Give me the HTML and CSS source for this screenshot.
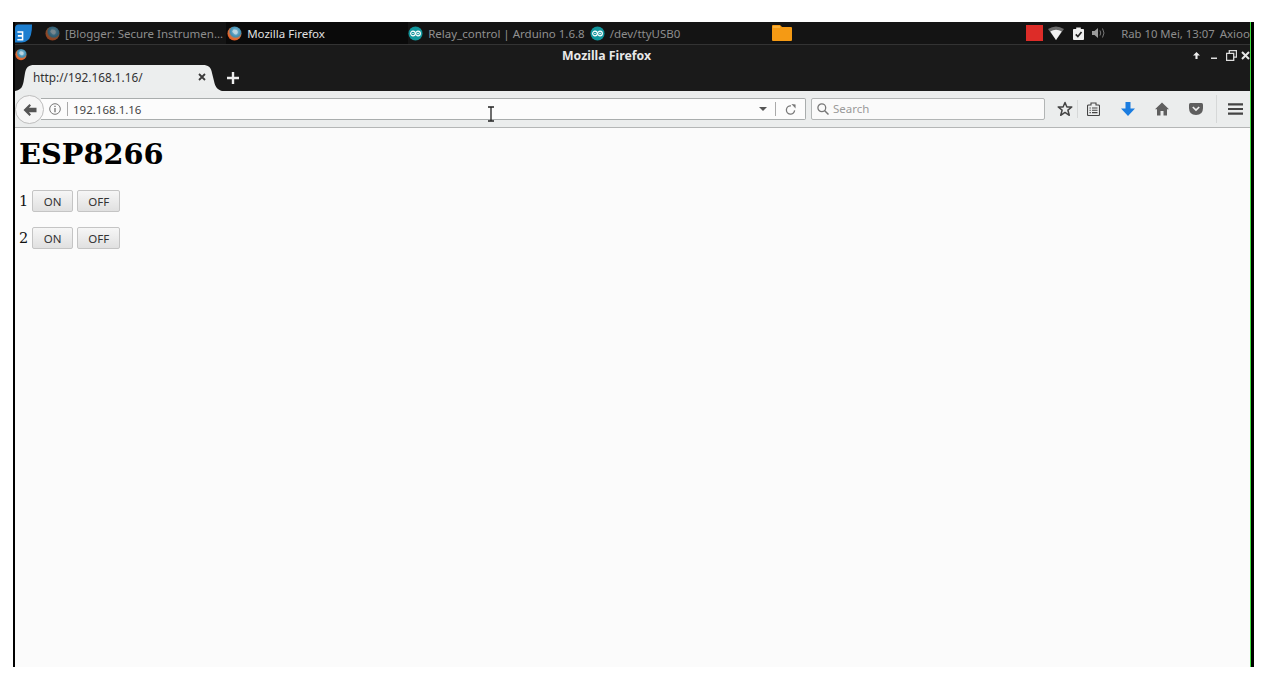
FILE: index.html
```html
<!DOCTYPE html>
<html lang="id">
<head>
<meta charset="utf-8">
<title>Mozilla Firefox</title>
<link rel="stylesheet" href="styles.css">
</head>
<body>
<svg class="defs" width="0" height="0" aria-hidden="true">
  <defs>
    <radialGradient id="fx" cx=".58" cy=".36" r=".68"><stop offset="0" stop-color="#8fc0d6"/><stop offset=".55" stop-color="#3f8fb4"/><stop offset=".72" stop-color="#d9703a"/><stop offset="1" stop-color="#e8551c"/></radialGradient>
    <symbol id="firefox" viewBox="0 0 16 16"><circle cx="8" cy="8" r="7.500" fill="url(#fx)"/><path d="M6.500 4C8.500 3 11 4 11.500 6 12 8 10 9.500 8.500 9 7 8.500 7 7 5.500 6.500z" fill="#d5e2e8" opacity=".7"/></symbol>
    <symbol id="arduino" viewBox="0 0 16 16"><circle cx="8" cy="8" r="7.500" fill="#12969c"/><circle cx="5.300" cy="8" r="2.500" fill="none" stroke="#fff" stroke-width="1.200"/><circle cx="10.700" cy="8" r="2.500" fill="none" stroke="#fff" stroke-width="1.200"/><path d="M4.300 8h2M9.700 8h2M10.700 7v2" stroke="#fff" stroke-width=".8"/></symbol>
  </defs>
</svg>
<main class="screen">
  <div class="desktop">
    <header class="panel">
      <svg class="start" viewBox="0 0 19 19"><path d="M0 4Q0 0 4 0H18Q18 14 13 17 11 19 7 19H0z" fill="#1d7fd0"/><path d="M2.500 8H8V16H2.500M3 12H8" fill="none" stroke="#fff" stroke-width="1.600"/></svg>
      <div class="task task-dim">
        <svg class="task-icon"><use href="#firefox"/></svg>
        <span>[Blogger: Secure Instrumen...</span>
      </div>
      <div class="task task-active">
        <svg class="task-icon"><use href="#firefox"/></svg>
        <span>Mozilla Firefox</span>
      </div>
      <div class="task task-relay">
        <svg class="task-icon"><use href="#arduino"/></svg>
        <span>Relay_control | Arduino 1.6.8</span>
      </div>
      <div class="task task-serial">
        <svg class="task-icon"><use href="#arduino"/></svg>
        <span>/dev/ttyUSB0</span>
      </div>
      <svg class="folder" viewBox="0 0 20 16"><path d="M0 1Q0 0 1 0H8L10 2H19Q20 2 20 3V15Q20 16 19 16H1Q0 16 0 15z" fill="#f59a14"/><path d="M1 2H8" stroke="#ffc860"/></svg>
      <div class="tray">
        <span class="tray-red"></span>
        <svg class="tray-wifi" viewBox="0 0 16 14"><path d="M0 3Q8-2 16 3L8 14z" fill="#6b6b6b"/><path d="M2.300 5.500Q8 2 13.700 5.500L8 14z" fill="#f2f2f2"/></svg>
        <svg class="tray-clip" viewBox="0 0 12 14"><path d="M1 2H3.500V.5H8.500V2H11Q12 2 12 3V13Q12 14 11 14H1Q0 14 0 13V3Q0 2 1 2z" fill="#eee"/><path d="M3 8L5.300 10.300 9.300 5.300" fill="none" stroke="#222" stroke-width="1.800"/></svg>
        <svg class="tray-vol" viewBox="0 0 15 12"><path d="M0 4H2.500L6 1V11L2.500 8H0z" fill="#9a9a9a"/><path d="M8 3.500Q9.500 6 8 8.500M10.500 1.500Q13.500 6 10.500 10.500" fill="none" stroke="#777"/></svg>
        <span class="clock">Rab 10 Mei, 13:07</span>
        <span class="host">Axioo</span>
      </div>
    </header>
    <div class="titlebar">
      <svg class="title-icon"><use href="#firefox"/></svg>
      <strong class="title-text">Mozilla Firefox</strong>
      <div class="wm">
        <svg viewBox="0 0 8 8" class="wm-up"><path d="M4 0L8 4H5.200V8H2.800V4H0z" fill="#eee"/></svg>
        <svg viewBox="0 0 8 8" class="wm-min"><path d="M1 6.500H7V8H1z" fill="#ddd"/></svg>
        <svg viewBox="0 0 10 10" class="wm-max"><path d="M3 2.500V.5H9.500V6.500H7.500M.5 3H7V9.500H.5z" fill="none" stroke="#ddd" stroke-width="1.200"/></svg>
        <svg viewBox="0 0 9 9" class="wm-close"><path d="M1 1L8 8M8 1L1 8" stroke="#e6e6e6" stroke-width="2"/></svg>
      </div>
    </div>
    <div class="tabstrip">
      <div class="tab">
        <span class="tab-title">http://192.168.1.16/</span>
        <svg class="tab-close" viewBox="0 0 8 8"><path d="M1 1L7 7M7 1L1 7" stroke="#3a3a3a" stroke-width="1.800"/></svg>
      </div>
      <svg class="newtab" viewBox="0 0 12 12"><path d="M6 0V12M0 6H12" stroke="#eee" stroke-width="2.400"/></svg>
    </div>
    <nav class="navbar">
      <div class="back"><svg viewBox="0 0 14 12"><path d="M6.500 0L.5 6 6.500 12 8 10.500 6 8.200H13.500V3.800H6L8 1.500z" fill="#555"/></svg></div>
      <div class="urlbar">
        <svg class="info" viewBox="0 0 12 12"><circle cx="6" cy="6" r="5.300" fill="none" stroke="#777"/><path d="M6 5V9.200M6 2.800V4" stroke="#666" stroke-width="1.200"/></svg>
        <span class="sep"></span>
        <span class="url">192.168.1.16</span>
        <span class="url-arrow"></span>
        <span class="sep sep-right"></span>
        <svg class="reload" viewBox="0 0 12 12"><path d="M10.500 7A4.500 4.500 0 1 1 6.500 2" fill="none" stroke="#777" stroke-width="1.400"/><path d="M7 0L11.500 .5V5z" fill="#777"/></svg>
      </div>
      <div class="searchbar">
        <svg class="glass" viewBox="0 0 12 12"><circle cx="4.800" cy="4.800" r="3.900" fill="none" stroke="#777" stroke-width="1.300"/><path d="M7.500 7.500L11.500 11.500" stroke="#777" stroke-width="1.500"/></svg>
        <span>Search</span>
      </div>
      <div class="tools">
        <svg class="tool-star" viewBox="0 0 16 16"><path d="M8 1.500L9.900 6H14.800L10.900 9.200 12.300 14.300 8 11.400 3.700 14.300 5.100 9.200 1.200 6H6.100z" fill="none" stroke="#444" stroke-width="1.500" stroke-linejoin="round"/></svg>
        <span class="tool-sep"></span>
        <svg class="tool-list" viewBox="0 0 13 14"><path d="M1.500 3H4V1H9V3H11.500Q12.500 3 12.500 4V12.500Q12.500 13.500 11.500 13.500H1.500Q.5 13.500 .5 12.500V4Q.5 3 1.500 3z" fill="none" stroke="#444" stroke-width="1.100"/><path d="M2.500 6H3.800M5 6H10.500M2.500 8.300H3.800M5 8.300H10.500M2.500 10.600H3.800M5 10.600H10.500" stroke="#444" stroke-width="1.100"/></svg>
        <svg class="tool-down" viewBox="0 0 14 14"><path d="M4.500 0H9.500V6.500H14L7 14 0 6.500H4.500z" fill="#1b7de0"/></svg>
        <svg class="tool-home" viewBox="0 0 14 14"><path d="M7 .5L14 7.300H12V13.500H8.500V9H5.500V13.500H2V7.300H0z" fill="#5f5f5f"/></svg>
        <svg class="tool-pocket" viewBox="0 0 14 12"><path d="M1.500 0H12.500Q14 0 14 1.500V5Q14 12 7 12 0 12 0 5V1.500Q0 0 1.500 0z" fill="#5e5e5e"/><path d="M3.800 4L7 7 10.200 4" fill="none" stroke="#eee" stroke-width="1.700"/></svg>
        <span class="tool-sep tool-sep-tall"></span>
        <svg class="tool-menu" viewBox="0 0 15 12"><path d="M0 1.300H15M0 6H15M0 10.700H15" stroke="#444" stroke-width="2.200"/></svg>
      </div>
    </nav>
    <section class="page">
      <h1>ESP8266</h1>
      <p class="row">1<button class="btn btn-on">ON</button><button class="btn btn-off">OFF</button></p>
      <p class="row">2<button class="btn btn-on">ON</button><button class="btn btn-off">OFF</button></p>
    </section>
  </div>
  <svg class="ibeam" viewBox="0 0 8 16"><path d="M1 1H7M4 1V15M1 15H7" fill="none" stroke="#222" stroke-width="1.300"/></svg>
</main>
</body>
</html>
```

FILE: styles.css
```css
* { box-sizing: border-box; }
html, body { margin: 0; height: 100%; background: #fff; overflow: hidden; }
.defs { display: block; height: 0; }
.screen {
  position: relative;
  display: flex;
  width: 1241px;
  height: 645px;
  margin: 22px 0 0 13px;
  border-left: 2px solid #000;
  border-right: 3px solid #000;
}
.desktop {
  flex: 1;
  display: flex;
  flex-direction: column;
  min-width: 0;
  border-right: 1px solid #3ee03e;
  font-family: "Noto Sans", sans-serif;
}

/* top panel */
.panel {
  flex: none;
  height: 23px;
  display: flex;
  align-items: center;
  background: #141414;
  border-bottom: 1px solid #333;
  font-size: 11.500px;
  color: #8d8d8d;
  white-space: nowrap;
}
.start { width: 18px; height: 19px; flex: none; }
.task { display: flex; align-items: center; height: 22px; flex: none; }
.task-icon { width: 15px; height: 15px; flex: none; }
.task-dim { margin-left: 12px; }
.task-dim .task-icon { opacity: .6; }
.task-dim span { margin-left: 5px; }
.task-active { width: 182px; margin-left: 3px; padding-left: 1px; background: #0a0a0a; color: #e0e0e0; }
.task-active span { margin-left: 5px; }
.task-relay { color: #909090; }
.task-relay span { margin-left: 5px; }
.task-serial { margin-left: 5px; }
.task-serial span { margin-left: 5px; }
.folder { width: 20px; height: 16px; margin-left: 92px; flex: none; }
.tray { display: flex; align-items: center; margin-left: auto; }
.tray-red { width: 17px; height: 16px; background: #dd2c28; }
.tray-wifi { width: 16px; height: 14px; margin-left: 5px; }
.tray-clip { width: 11px; height: 13px; margin-left: 9px; }
.tray-vol { width: 15px; height: 12px; margin-left: 8px; }
.clock { margin-left: 14px; font-size: 11.300px; }
.host { margin-left: 5px; }

/* window title */
.titlebar {
  position: relative;
  flex: none;
  height: 20px;
  display: flex;
  align-items: center;
  background: #1a1a1a;
}
.title-icon { width: 12px; height: 15px; margin-top: -2px; flex: none; }
.title-text {
  position: absolute;
  left: 547px;
  top: 2px;
  font-size: 12.300px;
  font-weight: 700;
  color: #e8e8e8;
}
.wm { display: flex; align-items: center; margin-left: auto; }
.wm-up { width: 7px; height: 7px; }
.wm-min { width: 8px; height: 8px; margin-left: 10px; }
.wm-max { width: 11px; height: 11px; margin-left: 8px; }
.wm-close { width: 9px; height: 9px; margin-left: 4px; }

/* tabs */
.tabstrip {
  flex: none;
  height: 26px;
  display: flex;
  align-items: flex-end;
  background: #1a1a1a;
}
.tab {
  width: 207px;
  height: 26px;
  display: flex;
  align-items: center;
  padding: 0 16px 2px 18px;
  background: #eceeee;
  clip-path: path("M0 26C6 25 8 22 9 14L10 8C11 2 14 0 19 0H188C193 0 196 2 197 8L199 16C200 22 203 25 207 26Z");
  font-size: 11.800px;
  color: #333;
}
.tab-title { flex: 1; }
.tab-close { width: 8px; height: 8px; }
.newtab { width: 12px; height: 12px; margin: 0 0 7px 5px; }

/* nav bar */
.navbar {
  flex: none;
  height: 37px;
  display: flex;
  align-items: flex-start;
  padding-top: 7px;
  background: #ebeded;
  border-bottom: 1px solid #b4b6b6;
  font-size: 11.500px;
}
.back {
  flex: none;
  width: 29px;
  height: 29px;
  margin-top: -3px;
  margin-right: -3px;
  z-index: 1;
  display: flex;
  align-items: center;
  justify-content: center;
  background: #f6f6f6;
  border: 1px solid #bdbdbd;
  border-radius: 50%;
}
.back svg { width: 14px; height: 12px; }
.urlbar {
  flex: none;
  width: 765px;
  height: 22px;
  display: flex;
  align-items: center;
  padding-left: 8px;
  background: #fcfcfc;
  border: 1px solid #a9adad;
  border-left: 0;
  border-radius: 0 2px 2px 0;
  color: #444;
}
.info { width: 12px; height: 12px; flex: none; }
.sep { width: 1px; height: 14px; background: #aaa; margin: 0 5px 0 6px; flex: none; }
.url { flex: 1; }
.url-arrow {
  width: 0;
  height: 0;
  margin-right: 1px;
  border: 4px solid transparent;
  border-top: 4px solid #555;
  border-bottom: 0;
}
.sep-right { margin: 0 9px 0 7px; }
.reload { width: 11px; height: 11px; margin-right: 9px; flex: none; }
.searchbar {
  flex: none;
  width: 234px;
  height: 22px;
  margin-left: 5px;
  display: flex;
  align-items: center;
  gap: 4px;
  padding: 0 0 1px 5px;
  background: #fafafa;
  border: 1px solid #b2b5b5;
  border-radius: 2px;
  color: #9a9a9a;
}
.glass { width: 12px; height: 12px; }
.tools { flex: 1; display: flex; align-items: center; height: 22px; }
.tool-star { width: 16px; height: 16px; margin-left: 12px; flex: none; }
.tool-sep { width: 1px; height: 18px; background: #d6d8d8; margin-left: 4px; flex: none; }
.tool-list { width: 13px; height: 14px; margin-left: 9px; flex: none; }
.tool-down { width: 14px; height: 14px; margin-left: 21px; flex: none; }
.tool-home { width: 14px; height: 14px; margin-left: 20px; flex: none; }
.tool-pocket { width: 14px; height: 12px; margin-left: 20px; flex: none; }
.tool-sep-tall { height: 28px; margin-left: 13px; }
.tool-menu { width: 15px; height: 12px; margin-left: 11px; flex: none; }

/* page */
.page {
  flex: 1;
  padding: 0 4px;
  background: #fbfbfb;
  font-family: "DejaVu Serif", serif;
  font-size: 14.500px;
  color: #111;
}
h1 {
  margin: 0;
  padding-top: 8px;
  height: 62px;
  font-size: 28.800px;
  line-height: 36px;
  font-weight: 700;
  color: #000;
}
.row {
  display: flex;
  align-items: center;
  height: 22px;
  margin: 0 0 15px;
  gap: 4px;
}
.btn {
  height: 22px;
  padding: 0;
  background: linear-gradient(#f6f6f6, #e0e0e0);
  border: 1px solid #c4c4c4;
  border-radius: 2px;
  font-family: "Noto Sans", sans-serif;
  font-size: 11.500px;
  color: #333;
}
.btn-on { width: 41px; }
.btn-off { width: 43px; }

/* mouse cursor */
.ibeam { position: absolute; left: 472px; top: 84px; width: 8px; height: 16px; }
```
